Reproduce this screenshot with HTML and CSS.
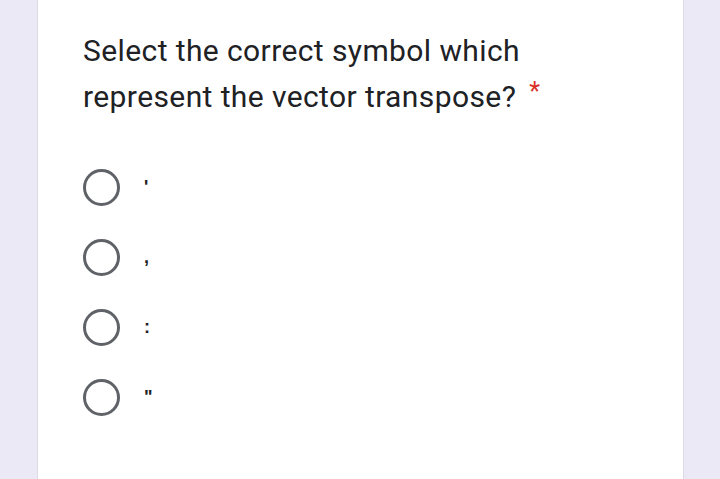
FILE: index.html
```html
<!DOCTYPE html>
<html>
<head>
<meta charset="utf-8">
<link rel="stylesheet" href="styles.css">
</head>
<body>
<div class="card">
  <div class="question">Select the correct symbol which represent the vector transpose?<span class="req">*</span></div>
  <div class="options">
    <div class="option"><span class="radio"></span><span class="label">'</span></div>
    <div class="option"><span class="radio"></span><span class="label">,</span></div>
    <div class="option"><span class="radio"></span><span class="label">:</span></div>
    <div class="option"><span class="radio"></span><span class="label">"</span></div>
  </div>
</div>
</body>
</html>
```
FILE: styles.css
```css
html, body {
  margin: 0;
  height: 100%;
}
body {
  background: #ece9f7;
  font-family: Roboto, "Liberation Sans", Arial, sans-serif;
  overflow: hidden;
}
.card {
  margin-left: 37px;
  width: 647px;
  height: 100%;
  background: #ffffff;
  border-left: 1px solid #dcdae4;
  border-right: 1px solid #dcdae4;
  padding: 28px 0 0 45px;
  box-sizing: border-box;
}
.question {
  font-size: 30px;
  line-height: 46px;
  color: #202124;
  width: 500px;
  letter-spacing: 0.4px;
}
.req {
  color: #d93025;
  margin-left: 13px;
  font-size: 25px;
  vertical-align: top;
  line-height: 36px;
}
.options {
  margin-top: 32px;
  display: flex;
  flex-direction: column;
}
.option {
  height: 70px;
  display: flex;
  align-items: center;
}
.radio {
  width: 37px;
  height: 37px;
  box-sizing: border-box;
  border: 3px solid #5f6368;
  border-radius: 50%;
  flex: none;
}
.label {
  margin-left: 24px;
  font-size: 18px;
  font-weight: 700;
  color: #202124;
  font-family: "Liberation Sans", Arial, sans-serif;
}
```
